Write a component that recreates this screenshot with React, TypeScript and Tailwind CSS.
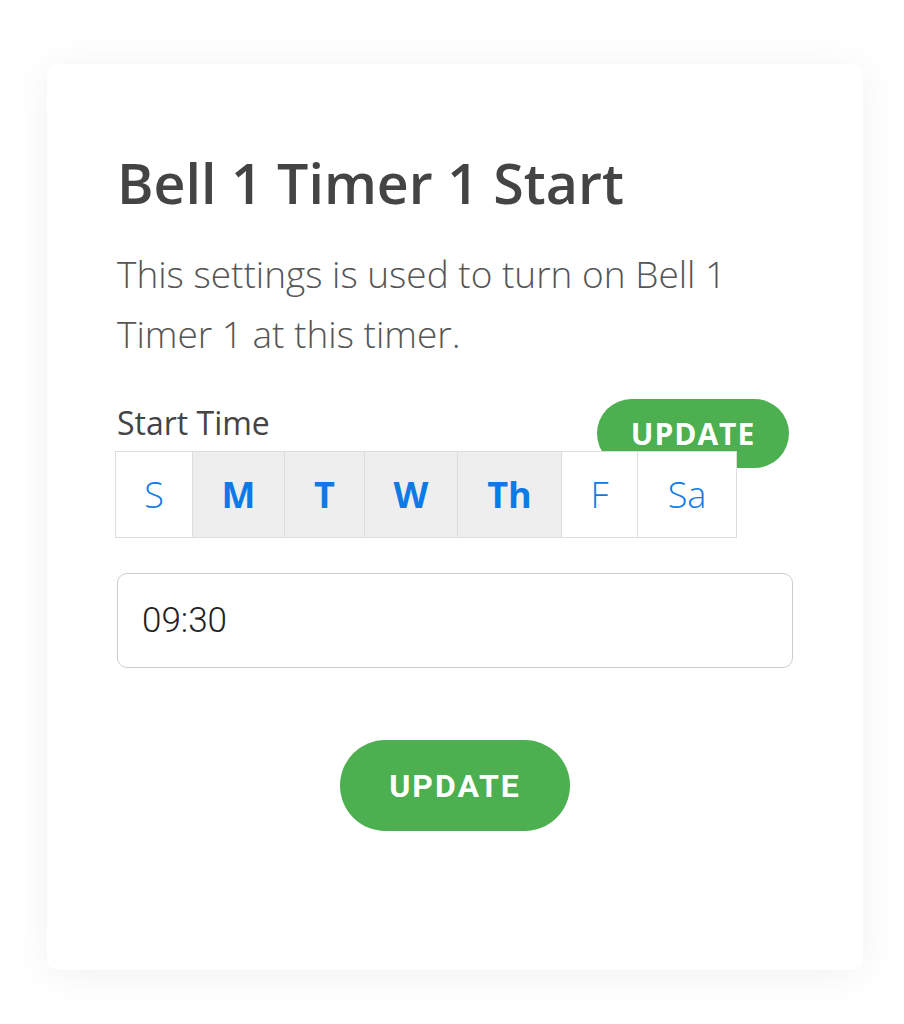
import { useState } from "react";

const DAYS = [
  { key: "S", on: false, w: "w-[78px]" },
  { key: "M", on: true, w: "w-[93px]" },
  { key: "T", on: true, w: "w-[81px]" },
  { key: "W", on: true, w: "w-[94px]" },
  { key: "Th", on: true, w: "w-[105px]" },
  { key: "F", on: false, w: "w-[77px]" },
  { key: "Sa", on: false, w: "w-[100px]" },
];

export default function App() {
  const [days, setDays] = useState(DAYS);
  const [time, setTime] = useState("09:30");

  const toggle = (key: string) =>
    setDays((prev) => prev.map((d) => (d.key === key ? { ...d, on: !d.on } : d)));

  return (
    <div className="min-h-[1024px] w-[904px] bg-white pt-[64px] pl-[47px] font-['Open_Sans',sans-serif]">
      <div className="h-[906px] w-[816px] rounded-[10px] bg-white px-[70px] pt-[81px] shadow-[0_4px_40px_rgba(0,0,0,0.06)]">
        <h1 className="text-[55.5px] leading-[76px] font-semibold text-[#444444]">Bell 1 Timer 1 Start</h1>
        <p className="mt-[23px] text-[37px] leading-[60px] font-light text-[#555555]">
          This settings is used to turn on Bell 1 Timer 1 at this timer.
        </p>

        <div className="relative mt-[39px]">
          <div className="text-[32px] leading-[40px] text-[#444444]">Start Time</div>
          <button className="absolute top-[-4px] right-[4px] z-0 h-[69px] w-[192px] rounded-full bg-[#4caf50] text-[30px] font-bold tracking-[1px] text-white">
            UPDATE
          </button>
          <div className="relative z-10 mt-[8px] -ml-[2px] flex w-fit">
            {days.map((d) => (
              <button
                key={d.key}
                onClick={() => toggle(d.key)}
                className={
                  "-ml-px flex h-[87px] items-center justify-center border border-[#dddddd] text-[36px] text-[#0d7ae8] first:ml-0 " +
                  d.w +
                  " " +
                  (d.on ? "bg-[#eeeeee] font-bold" : "bg-white font-light")
                }
              >
                {d.key}
              </button>
            ))}
          </div>
        </div>

        <input
          value={time}
          onChange={(e) => setTime(e.target.value)}
          className="mt-[35px] h-[95px] w-full rounded-[10px] border border-[#cccccc] px-[24px] font-['Roboto',sans-serif] text-[35px] font-light text-[#222222] outline-none"
        />

        <div className="mt-[72px] flex justify-center">
          <button className="h-[91px] w-[230px] rounded-full bg-[#4caf50] font-['Roboto',sans-serif] text-[32px] font-bold tracking-[2px] text-white">
            UPDATE
          </button>
        </div>
      </div>
    </div>
  );
}
